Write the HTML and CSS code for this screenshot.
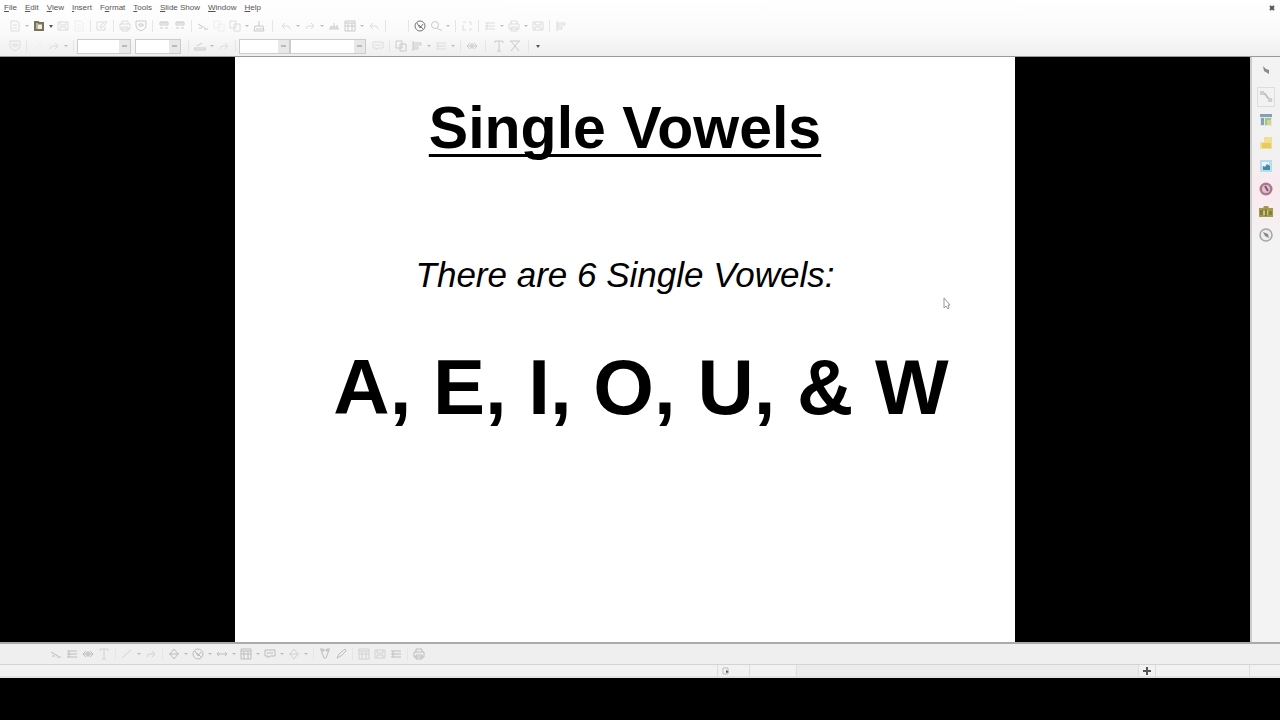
FILE: index.html
```html
<!DOCTYPE html>
<html lang="en">
<head>
    <meta charset="UTF-8">
    <meta name="viewport" content="width=device-width, initial-scale=1.0">
    <title>Single Vowels</title>
    <link rel="stylesheet" href="styles.css">
</head>
<body>

    <!-- Icon shapes shared by the toolbars -->
    <svg class="sprite" aria-hidden="true">
        <symbol id="page" viewBox="0 0 12 12"><path d="M2 1h6l2 2v8H2zM4 5h4M4 8h4"/></symbol>
        <symbol id="disk" viewBox="0 0 12 12"><path d="M1 2h10v8H1zM3 2v3h6V2M3 10V7h6v3"/></symbol>
        <symbol id="pen" viewBox="0 0 12 12"><path d="M1 2h7M1 2v8h8V7M4 8l1-3 5-4 1 1-4 5z"/></symbol>
        <symbol id="print" viewBox="0 0 12 12"><path d="M3 4V1h6v3M1 4h10v5H1zM3 7h6v4H3z"/></symbol>
        <symbol id="shield" viewBox="0 0 12 12"><path d="M1 1h10v5q0 3-5 5Q1 9 1 6zM4 4h4v2H4z"/></symbol>
        <symbol id="check" viewBox="0 0 12 12"><path d="M2 2h8v3H2zM2 8h3M7 8h3M3 3h6"/></symbol>
        <symbol id="cut" viewBox="0 0 12 12"><path d="M1 4l7 4M11 9H7M2 8h3"/></symbol>
        <symbol id="copy" viewBox="0 0 12 12"><path d="M1 1h6v7H1zM5 4h6v7H5z"/></symbol>
        <symbol id="brush" viewBox="0 0 12 12"><path d="M6 1v5M2 6h8l1 5H1zM3 9h7"/></symbol>
        <symbol id="undo" viewBox="0 0 12 12"><path d="M5 3L2 6l3 3M2 6h5q3 0 3 3"/></symbol>
        <symbol id="redo" viewBox="0 0 12 12"><path d="M7 3l3 3-3 3M10 6H5Q2 6 2 9"/></symbol>
        <symbol id="chart" viewBox="0 0 12 12"><path d="M1 9h10M3 9V6M6 9V3M9 9V5M2 7h8"/></symbol>
        <symbol id="table" viewBox="0 0 12 12"><path d="M1 1h10v10H1zM1 3h10M1 6h10M4 3v8M8 3v8"/></symbol>
        <symbol id="compass" viewBox="0 0 12 12"><circle cx="6" cy="6" r="5"/><path d="M3 3l3 5 3-4M5 5l4 4"/></symbol>
        <symbol id="zoom" viewBox="0 0 12 12"><circle cx="5" cy="5" r="3.5"/><path d="M7 8l3 2h2"/></symbol>
        <symbol id="grid" viewBox="0 0 12 12"><path d="M2 2h3M8 2h2v3M2 5v5h3M8 10h2V8"/></symbol>
        <symbol id="line" viewBox="0 0 12 12"><path d="M1 10l9-8"/></symbol>
        <symbol id="bars" viewBox="0 0 12 12"><path d="M1 3h10M1 6h10M1 9h10M3 3v6"/></symbol>
        <symbol id="align" viewBox="0 0 12 12"><path d="M2 1v10M2 3h8v2H2M2 7h5v2H2"/></symbol>
        <symbol id="bubble" viewBox="0 0 12 12"><path d="M1 2h10v6H6l-2 2V8H1zM3 5h6"/></symbol>
        <symbol id="arrows" viewBox="0 0 12 12"><path d="M4 3L1 6l3 3M8 3l3 3-3 3M1 6h10M5 4h2v4H5z"/></symbol>
        <symbol id="text" viewBox="0 0 12 12"><path d="M2 3V1h8v2M6 1v10M4 11h4"/></symbol>
        <symbol id="cross" viewBox="0 0 12 12"><path d="M2 1l8 10M10 1L2 11M1 1h10"/></symbol>
        <symbol id="diamond" viewBox="0 0 12 12"><path d="M6 1l4 5-4 5-4-5zM1 6h10"/></symbol>
        <symbol id="nodes" viewBox="0 0 12 12"><path d="M2 2h8L7 10H5zM1 1h3v3M8 4V1h3"/></symbol>
        <symbol id="pencil" viewBox="0 0 12 12"><path d="M2 10l2-4 6-5 1 2-5 5z"/></symbol>
    </svg>

    <div class="app">
        <header class="top">
            <nav class="menu">
                <button><u>F</u>ile</button>
                <button><u>E</u>dit</button>
                <button><u>V</u>iew</button>
                <button><u>I</u>nsert</button>
                <button>F<u>o</u>rmat</button>
                <button><u>T</u>ools</button>
                <button><u>S</u>lide Show</button>
                <button><u>W</u>indow</button>
                <button><u>H</u>elp</button>
                <button class="close" aria-label="Close"><svg viewBox="0 0 6 6"><path d="M1 1l4 4M5 1L1 5"/></svg></button>
            </nav>

            <div class="toolbar">
                <button class="icon" aria-label="New"><svg><use href="#page"/></svg></button>
                <button class="caret" aria-label="New options"></button>
                <button class="icon open" aria-label="Open"><svg viewBox="0 0 12 12"><path fill="#b9b59c" d="M2 2h3l1 1h4v7H2z"/><path fill="#eeeee4" stroke="none" d="M5 5h4v4H5z"/></svg></button>
                <button class="caret dark" aria-label="Open options"></button>
                <button class="icon" aria-label="Save"><svg><use href="#disk"/></svg></button>
                <button class="icon faint" aria-label="Mail"><svg><use href="#page"/></svg></button>
                <span class="sep"></span>
                <button class="icon" aria-label="Edit file"><svg><use href="#pen"/></svg></button>
                <span class="sep"></span>
                <button class="icon" aria-label="Print"><svg><use href="#print"/></svg></button>
                <button class="icon mid" aria-label="Export"><svg><use href="#shield"/></svg></button>
                <span class="sep"></span>
                <button class="icon mid" aria-label="Spelling"><svg><use href="#check"/></svg></button>
                <button class="icon mid" aria-label="Auto spelling"><svg><use href="#check"/></svg></button>
                <span class="sep"></span>
                <button class="icon mid" aria-label="Cut"><svg><use href="#cut"/></svg></button>
                <button class="icon faint" aria-label="Copy"><svg><use href="#copy"/></svg></button>
                <button class="icon" aria-label="Paste"><svg><use href="#copy"/></svg></button>
                <button class="caret" aria-label="Paste options"></button>
                <button class="icon mid" aria-label="Clone formatting"><svg><use href="#brush"/></svg></button>
                <span class="sep wide"></span>
                <button class="icon" aria-label="Undo"><svg><use href="#undo"/></svg></button>
                <button class="caret" aria-label="Undo list"></button>
                <button class="icon" aria-label="Redo"><svg><use href="#redo"/></svg></button>
                <button class="caret" aria-label="Redo list"></button>
                <button class="icon mid" aria-label="Chart"><svg><use href="#chart"/></svg></button>
                <button class="icon mid" aria-label="Table"><svg><use href="#table"/></svg></button>
                <button class="caret" aria-label="Table options"></button>
                <button class="icon" aria-label="Hyperlink"><svg><use href="#undo"/></svg></button>
                <span class="sep"></span>
                <span class="space"></span>
                <span class="sep"></span>
                <button class="icon strong" aria-label="Navigator"><svg><use href="#compass"/></svg></button>
                <button class="icon mid" aria-label="Zoom"><svg><use href="#zoom"/></svg></button>
                <button class="caret" aria-label="Zoom options"></button>
                <span class="sep"></span>
                <button class="icon" aria-label="Display grid"><svg><use href="#grid"/></svg></button>
                <span class="sep"></span>
                <button class="icon" aria-label="Slide"><svg><use href="#bars"/></svg></button>
                <button class="caret" aria-label="Slide options"></button>
                <button class="icon" aria-label="Slide layout"><svg><use href="#print"/></svg></button>
                <button class="caret" aria-label="Layout options"></button>
                <button class="icon" aria-label="Slide design"><svg><use href="#disk"/></svg></button>
                <span class="sep"></span>
                <button class="icon" aria-label="Slide show"><svg><use href="#align"/></svg></button>
            </div>

            <div class="toolbar">
                <button class="icon" aria-label="Edit points"><svg><use href="#shield"/></svg></button>
                <span class="sep"></span>
                <button class="icon faint" aria-label="Line"><svg><use href="#line"/></svg></button>
                <button class="icon" aria-label="Arrow style"><svg><use href="#redo"/></svg></button>
                <button class="caret" aria-label="Arrow styles"></button>
                <span class="sep"></span>
                <select class="combo" aria-label="Line style"></select>
                <select class="combo narrow" aria-label="Line width"></select>
                <span class="sep"></span>
                <button class="icon mid" aria-label="Line color"><svg viewBox="0 0 12 12"><path d="M3 6l5-3M0 8h12v2H0z"/></svg></button>
                <button class="caret" aria-label="Line colors"></button>
                <button class="icon" aria-label="Area"><svg><use href="#redo"/></svg></button>
                <span class="sep"></span>
                <select class="combo joined" aria-label="Area style"></select>
                <select class="combo long" aria-label="Area fill"></select>
                <button class="icon" aria-label="Shadow"><svg><use href="#bubble"/></svg></button>
                <span class="sep"></span>
                <button class="icon mid" aria-label="Rotate"><svg><use href="#copy"/></svg></button>
                <button class="icon mid" aria-label="Align"><svg><use href="#align"/></svg></button>
                <button class="caret" aria-label="Align options"></button>
                <button class="icon" aria-label="Arrange"><svg><use href="#bars"/></svg></button>
                <button class="caret" aria-label="Arrange options"></button>
                <span class="sep"></span>
                <button class="icon mid" aria-label="Distribute"><svg><use href="#arrows"/></svg></button>
                <span class="sep wide"></span>
                <button class="icon mid" aria-label="Text"><svg><use href="#text"/></svg></button>
                <button class="icon mid" aria-label="Crop"><svg><use href="#cross"/></svg></button>
                <span class="sep wide"></span>
                <button class="caret dark" aria-label="More"></button>
            </div>
        </header>

        <div class="middle">
            <main class="workspace">
                <section class="slide">
                    <h1>Single Vowels</h1>
                    <p class="intro">There are 6 Single Vowels:</p>
                    <p class="vowels">A, E, I, O, U, &amp; W</p>
                    <svg class="cursor" viewBox="0 0 8 13" aria-hidden="true"><path d="M1 1v10l2-2 2 3 1-1-1-3h2z"/></svg>
                </section>
            </main>

            <aside class="sidebar">
                <button aria-label="Sidebar settings"><svg viewBox="0 0 14 14"><path fill="#8a8a8a" d="M4 3l1 5 5 3V7L7 6z"/></svg></button>
                <button class="framed" aria-label="Properties"><svg viewBox="0 0 14 14"><path fill="none" stroke="#c2c2c2" stroke-width="2" d="M2 3l4 1 3 4 4 3"/><path fill="#cfcfcf" d="M1 1h4v4H1zM9 8h4v4H9z"/></svg></button>
                <button aria-label="Slide transition"><svg viewBox="0 0 14 14"><path fill="#dce7ee" d="M1 1h12v12H1z"/><path fill="#879fb4" d="M1 1h12v3H1zM2 5h3v7H2z"/><path fill="#9fc487" d="M6 5h6v7H6z"/><path fill="#d9d28b" d="M8 7h4v5H8z"/></svg></button>
                <button aria-label="Animation"><svg viewBox="0 0 14 14"><path fill="#f0df91" d="M5 1h8v12H1V6h4z"/><path fill="#e5cb62" d="M3 7h9v5H3z"/></svg></button>
                <button aria-label="Master slides"><svg viewBox="0 0 14 14"><path fill="#b8dce9" d="M1 1h12v12H1z"/><path fill="#e8f5fa" d="M3 3h7v4H3z"/><path fill="#488aa5" d="M4 7l2 1 2-3 3 2v4H4z"/></svg></button>
                <button aria-label="Styles"><svg viewBox="0 0 14 14"><circle cx="7" cy="7" r="6.5" fill="#a8788f"/><circle cx="7" cy="7" r="4" fill="#ddc3d0"/><path stroke="#875069" stroke-width="2" d="M6 4l3 5"/></svg></button>
                <button aria-label="Gallery"><svg viewBox="0 0 14 14"><path fill="#a49a4c" d="M0 3h4l1-2h4l1 2h4v9H0z"/><path fill="#857d3a" d="M1 5h3v5H1zM6 4h2v7H6zM10 6h3v4h-3z"/><path fill="#cbc485" d="M4 6h2v4H4zM8 5h1v5H8z"/></svg></button>
                <button aria-label="Navigator"><svg viewBox="0 0 14 14"><circle cx="7" cy="7" r="6" fill="#eee" stroke="#a5a5a5" stroke-width="1.5"/><path fill="#888" d="M4 4l5 2 1 4-4-2z"/></svg></button>
            </aside>
        </div>

        <footer>
            <div class="toolbar drawing">
                <button class="icon mid" aria-label="Select"><svg><use href="#cut"/></svg></button>
                <button class="icon mid" aria-label="Zoom and pan"><svg><use href="#bars"/></svg></button>
                <button class="icon mid" aria-label="Fill"><svg><use href="#arrows"/></svg></button>
                <button class="icon" aria-label="Text box"><svg><use href="#text"/></svg></button>
                <span class="sep"></span>
                <button class="icon" aria-label="Line"><svg><use href="#line"/></svg></button>
                <button class="caret" aria-label="Lines"></button>
                <button class="icon" aria-label="Connector"><svg><use href="#redo"/></svg></button>
                <span class="sep"></span>
                <button class="icon mid" aria-label="Basic shapes"><svg><use href="#diamond"/></svg></button>
                <button class="caret" aria-label="More basic shapes"></button>
                <button class="icon mid" aria-label="Symbols"><svg><use href="#compass"/></svg></button>
                <button class="caret" aria-label="More symbols"></button>
                <button class="icon mid" aria-label="Block arrows"><svg viewBox="0 0 12 12"><path d="M1 6h10M3 4L1 6l2 2M9 4l2 2-2 2"/></svg></button>
                <button class="caret" aria-label="More block arrows"></button>
                <button class="icon mid" aria-label="Flowchart"><svg><use href="#table"/></svg></button>
                <button class="caret" aria-label="More flowcharts"></button>
                <button class="icon mid" aria-label="Callouts"><svg><use href="#bubble"/></svg></button>
                <button class="caret" aria-label="More callouts"></button>
                <button class="icon" aria-label="Stars"><svg><use href="#diamond"/></svg></button>
                <button class="caret" aria-label="More stars"></button>
                <span class="sep"></span>
                <button class="icon mid" aria-label="Points"><svg><use href="#nodes"/></svg></button>
                <button class="icon mid" aria-label="Glue points"><svg><use href="#pencil"/></svg></button>
                <span class="sep"></span>
                <button class="icon" aria-label="Fontwork"><svg><use href="#table"/></svg></button>
                <button class="icon" aria-label="From file"><svg><use href="#disk"/></svg></button>
                <button class="icon mid" aria-label="Gallery"><svg><use href="#bars"/></svg></button>
                <span class="sep"></span>
                <button class="icon mid" aria-label="Extrusion"><svg><use href="#print"/></svg></button>
            </div>
            <div class="status">
                <span class="cell grow"></span>
                <span class="cell modified"><svg viewBox="0 0 8 8"><path fill="none" stroke="#bbb" d="M1 1h5v6H1z"/><path fill="#555" d="M4 3l3 2-3 1z"/></svg></span>
                <span class="cell small"></span>
                <span class="cell large"></span>
                <button class="cell plus" aria-label="Fit slide"><svg viewBox="0 0 8 8"><path fill="#555" d="M3 0h2v3h3v2H5v3H3V5H0V3h3z"/></svg></button>
                <span class="cell zoom"></span>
                <span class="cell end"></span>
            </div>
        </footer>
    </div>

</body>
</html>
```
FILE: styles.css
```css
* {
    box-sizing: border-box;
}
body {
    margin: 0;
    background-color: #000;
    font-family: "Liberation Sans", Arial, sans-serif;
}
button {
    border: none;
    padding: 0;
    background: none;
    color: inherit;
    font: inherit;
}
.sprite {
    display: none;
}
.app {
    display: flex;
    flex-direction: column;
    min-height: 100vh;
    padding-bottom: 42px; /* black strip under the window */
}

/* Menu and toolbars */
.top {
    background: linear-gradient(#fff, #fafafa 60%, #efefef);
    border-bottom: 1px solid #999;
}
.menu {
    display: flex;
    gap: 8px;
    height: 16px;
    padding: 0 5px 0 4px;
    align-items: center;
    font-size: 8px;
    line-height: 16px;
    color: #555;
}
.close {
    display: flex;
    margin-left: auto;
}
.close svg {
    width: 6px;
    height: 6px;
    stroke: #555;
    stroke-width: 2;
}
.toolbar {
    display: flex;
    align-items: center;
    height: 20px;
    padding-left: 7px;
}
.icon {
    display: flex;
    flex: none;
    justify-content: center;
    width: 16px;
}
.icon svg {
    width: 12px;
    height: 12px;
    fill: none;
    stroke: #dcdcdc;
}
.icon.faint svg {
    stroke: #eee;
}
.icon.mid svg {
    stroke: #cacaca;
}
.icon.strong svg {
    stroke: #777;
}
.icon.open svg {
    stroke: #77735a;
    stroke-width: 2;
}
.caret {
    display: flex;
    flex: none;
    justify-content: center;
    width: 8px;
}
.caret::before {
    content: "";
    border: 2px solid transparent;
    border-top-color: #bbb;
    border-bottom: none;
}
.caret.dark::before {
    border-top: 3px solid #555;
}
.sep {
    flex: none;
    width: 1px;
    height: 12px;
    margin: 0 3px;
    background-color: #e6e6e6;
}
.sep.wide {
    margin: 0 5px;
}
.space {
    width: 16px;
}
.combo {
    flex: none;
    appearance: none;
    width: 54px;
    height: 15px;
    margin: 0 4px 0 0;
    padding: 0;
    border: 1px solid #ccc;
    border-radius: 0;
    background: linear-gradient(#bbb, #bbb) right 3px center / 5px 2px no-repeat,
                linear-gradient(#e8e8e8, #e8e8e8) right / 11px 100% no-repeat,
                #fff;
}
.combo.narrow {
    width: 46px;
}
.combo.joined {
    width: 51px;
    margin: 0;
}
.combo.long {
    width: 76px;
}

/* Slide area */
.middle {
    display: flex;
    flex: 1;
}
.workspace {
    display: flex;
    flex: 1;
    justify-content: center;
}
.slide {
    position: relative;
    aspect-ratio: 4 / 3;
    padding-top: 37px;
    background-color: #fff;
    color: #000;
    text-align: center;
}
h1 {
    margin: 0;
    font-size: 59px;
    line-height: 68px;
    text-decoration: underline 3px;
    text-underline-offset: 6px;
    text-decoration-skip-ink: none;
}
.intro {
    margin: 93px 0 47px;
    font-size: 35px;
    font-style: italic;
    line-height: 40px;
}
.vowels {
    margin: 0;
    padding-left: 32px;
    font-size: 78px;
    font-weight: bold;
    line-height: 90px;
}
.cursor {
    position: absolute;
    top: 240px;
    right: 64px;
    width: 8px;
    height: 13px;
    fill: #fff;
    stroke: #999;
}

/* Sidebar */
.sidebar {
    display: flex;
    flex-direction: column;
    gap: 3px;
    width: 30px;
    padding: 3px 5px 0 5px;
    border-left: 2px solid #ccc;
    background: linear-gradient(#f3f3f3, #f1f1f1 16%, #f9eaee 23%, #f3f3f3 32%);
}
.sidebar button {
    display: flex;
    justify-content: center;
    align-items: center;
    height: 20px;
}
.sidebar button:first-child {
    margin-bottom: 4px;
}
.sidebar svg {
    width: 14px;
    height: 14px;
}
.framed {
    border: 1px solid #ddd;
}

/* Drawing bar and status bar */
footer {
    border-top: 2px solid #aaa;
    background-color: #efefef;
}
.drawing {
    padding-left: 48px;
}
.drawing .icon svg {
    stroke: #d2d2d2;
}
.drawing .mid svg {
    stroke: #bdbdbd;
}
.status {
    display: flex;
    height: 14px;
    border-top: 1px solid #d4d4d4;
    border-bottom: 2px solid #e2e2e2;
    background-color: #f2f2f2;
}
.cell {
    display: flex;
    justify-content: center;
    align-items: center;
    border-right: 1px solid #ddd;
}
.cell svg {
    width: 8px;
    height: 8px;
}
.grow {
    flex: 1;
}
.modified {
    justify-content: flex-start;
    width: 32px;
    padding-left: 4px;
}
.small {
    width: 47px;
}
.large {
    width: 342px;
    background-color: #ececec;
}
.plus {
    width: 17px;
}
.zoom {
    width: 94px;
}
.end {
    width: 30px;
    border-right: none;
}
```
